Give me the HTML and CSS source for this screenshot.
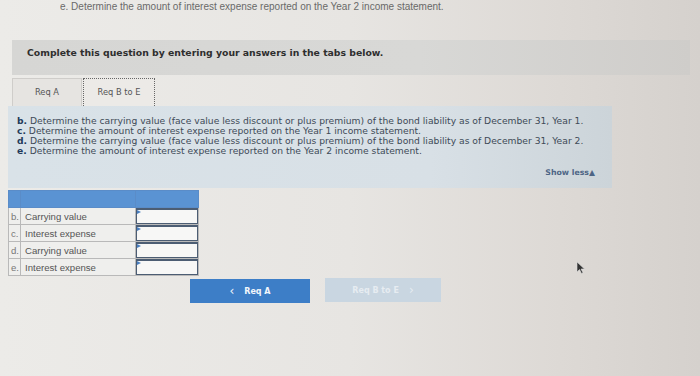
FILE: index.html
```html
<!DOCTYPE html>
<html>
<head>
<meta charset="utf-8">
<link rel="stylesheet" href="styles.css">
</head>
<body>
<div class="page">
  <div class="top-line">e. Determine the amount of interest expense reported on the Year 2 income statement.</div>
  <div class="banner">Complete this question by entering your answers in the tabs below.</div>
  <div class="tabs">
    <div class="tab">Req A</div>
    <div class="tab active">Req B to E</div>
  </div>
  <div class="panel">
    <p class="line"><b>b.</b> Determine the carrying value (face value less discount or plus premium) of the bond liability as of December 31, Year 1.</p>
    <p class="line"><b>c.</b> Determine the amount of interest expense reported on the Year 1 income statement.</p>
    <p class="line"><b>d.</b> Determine the carrying value (face value less discount or plus premium) of the bond liability as of December 31, Year 2.</p>
    <p class="line"><b>e.</b> Determine the amount of interest expense reported on the Year 2 income statement.</p>
    <div class="show-less">Show less&#9650;</div>
  </div>
  <table class="answers">
    <tr class="head"><th class="c1"></th><th class="c2"></th><th class="c3"></th></tr>
    <tr><td class="c1">b.</td><td class="c2">Carrying value</td><td class="c3"><span class="inp"></span></td></tr>
    <tr><td class="c1">c.</td><td class="c2">Interest expense</td><td class="c3"><span class="inp"></span></td></tr>
    <tr><td class="c1">d.</td><td class="c2">Carrying value</td><td class="c3"><span class="inp"></span></td></tr>
    <tr><td class="c1">e.</td><td class="c2">Interest expense</td><td class="c3"><span class="inp"></span></td></tr>
  </table>
  <div class="nav">
    <div class="btn prev"><span class="chev">&lsaquo;</span> Req A</div>
    <div class="btn next">Req B to E <span class="chev">&rsaquo;</span></div>
  </div>
  <svg class="cursor" width="9" height="13" viewBox="0 0 9 13"><path d="M1 1 L1 11 L3.5 8.5 L5.5 12.5 L7 11.8 L5 8 L8.5 8 Z" fill="#333" stroke="#ddd" stroke-width="0.6"/></svg>
</div>
</body>
</html>
```
FILE: styles.css
```css
html, body {
  margin: 0;
  padding: 0;
}
body {
  width: 700px;
  height: 376px;
  overflow: hidden;
  background: linear-gradient(90deg, #ecebe8 0%, #e7e5e2 50%, #ddd9d5 80%, #d5d1cd 100%);
  font-family: "DejaVu Sans", Verdana, sans-serif;
  color: #333;
}
.page {
  position: relative;
  height: 376px;
}
.top-line {
  margin: 0 0 0 60px;
  height: 14px;
  font-family: "Liberation Sans", Arial, sans-serif;
  font-size: 10px;
  line-height: 14px;
  color: #4a4a4a;
  opacity: 0.8;
}
.banner {
  margin: 26px 10px 0 12px;
  height: 35px;
  box-sizing: border-box;
  padding: 6px 0 0 15px;
  background: linear-gradient(90deg, #d6d6d4 0%, #d8d8d6 60%, #cfcdca 100%);
  font-weight: bold;
  font-size: 9.3px;
  line-height: 14px;
  color: #2e2e2e;
}
.tabs {
  display: flex;
  margin: 3px 0 0 12px;
  height: 28px;
}
.tab {
  width: 70px;
  box-sizing: border-box;
  border: 1px solid #cfcdca;
  border-bottom: none;
  display: flex;
  align-items: center;
  justify-content: center;
  font-size: 8.3px;
  color: #555;
  background: #e6e4e1;
  padding-bottom: 2px;
}
.tab.active {
  width: 72px;
  margin-left: 1px;
  border: 1px dotted #666;
  border-bottom: none;
  background: #eceae7;
}
.panel {
  margin: 0 88px 0 8px;
  height: 82px;
  box-sizing: border-box;
  padding: 10px 0 0 9px;
  background: linear-gradient(90deg, #d9e2e8 0%, #d8e0e6 70%, #ccd4d9 100%);
  font-size: 9.2px;
  color: #3e4a57;
}
.line {
  margin: 0;
  line-height: 10px;
  white-space: nowrap;
}
.line b {
  color: #233a5a;
}
.show-less {
  margin: 12px 17px 0 0;
  text-align: right;
  font-weight: bold;
  font-size: 7.8px;
  color: #4d6585;
}
.answers {
  margin: 2px 0 0 8px;
  border-collapse: collapse;
  table-layout: fixed;
  width: 190px;
  font-family: "Liberation Sans", Arial, sans-serif;
  font-size: 9.6px;
  color: #555;
}
.answers th {
  background: #5a93d3;
  height: 16px;
  padding: 0;
  border: 1px solid #5a8cc8;
}
.answers td {
  height: 16px;
  padding: 0;
  border: 1px solid #b9b9b9;
  background: #efefed;
}
.answers .c1 {
  width: 9px;
  padding-left: 2px;
  color: #777;
}
.answers .c2 {
  width: 110px;
  padding-left: 4px;
}
.answers .c3 {
  width: 62px;
}
.answers td.c3 {
  background: #f4f4f3;
}
.inp {
  display: block;
  height: 16px;
  margin: 0;
  box-sizing: border-box;
  border: 1px solid #4c5d73;
  border-top-width: 2px;
  background: #f7f7f6;
  position: relative;
}
.inp::before {
  content: "";
  position: absolute;
  left: 0;
  top: 0;
  border-left: 4px solid #4a7fc0;
  border-top: 2px solid transparent;
  border-bottom: 2px solid transparent;
}
.nav {
  display: flex;
  align-items: flex-start;
  margin: 2px 0 0 190px;
  gap: 15px;
}
.btn {
  height: 24px;
  display: flex;
  align-items: center;
  justify-content: center;
  font-size: 8px;
  font-weight: bold;
}
.btn.prev {
  width: 120px;
  margin-top: 1px;
  background: #3d7ec7;
  color: #f2f6fb;
}
.btn.next {
  width: 116px;
  background: #c9d6e1;
  color: #e6ecf1;
}
.chev {
  font-size: 12px;
  font-weight: normal;
  margin: 0 10px 0 0;
}
.btn.next .chev {
  margin: 0 0 0 10px;
}
.cursor {
  position: absolute;
  left: 576px;
  top: 261px;
}
```
